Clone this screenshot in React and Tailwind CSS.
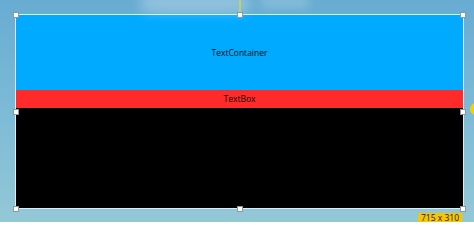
import React from 'react';

// selection handles around the picked element
const handles = [
  'left-[13px] top-[12px]',
  'left-[237px] top-[12px]',
  'left-[460px] top-[12px]',
  'left-[13px] top-[109px]',
  'left-[460px] top-[109px]',
  'left-[13px] top-[206px]',
  'left-[237px] top-[206px]',
  'left-[460px] top-[206px]',
];

export default function App() {
  return (
    <div className="relative w-[474px] h-[222px] overflow-hidden bg-gradient-to-b from-[#68acd2] via-[#7cbad6] to-[#93c8d6] font-['Open_Sans','Liberation_Sans',sans-serif]">
      {/* blurry wallpaper clouds */}
      <div className="absolute left-[140px] top-[-8px] w-[110px] h-[22px] rounded-full bg-white/25 blur-[6px]" />
      <div className="absolute left-[260px] top-[-4px] w-[50px] h-[12px] rounded-full bg-white/20 blur-[5px]" />

      <div className="pl-[16px] pt-[15px]">
        <div className="w-[447px] h-[193px] flex flex-col outline outline-1 outline-[#d8eef8]">
          <div className="h-[75px] bg-[#00aaff] flex items-center justify-center text-[8.5px] text-[#0a0a0a] pt-[2px]">
            TextContainer
          </div>
          <div className="h-[18px] bg-[#ff2b2b] flex items-center justify-center text-[8.5px] text-[#0a0a0a]">
            TextBox
          </div>
          <div className="flex-1 bg-black" />
        </div>
      </div>

      {/* rotate stem */}
      <div className="absolute left-[239px] top-0 w-[2px] h-[13px] bg-[#b9d46e]" />

      {handles.map((h) => (
        <div
          key={h}
          className={`absolute ${h} w-[6px] h-[6px] bg-white border border-[#8a98a0]`}
        />
      ))}

      {/* yellow knob at right edge */}
      <div className="absolute left-[470px] top-[103px] w-[12px] h-[12px] rounded-full bg-[#f5d000]" />

      <div className="absolute left-[418px] top-[213px] w-[44px] h-[11px] bg-[#f7c600] text-[8.5px] leading-[10px] text-[#222] text-center">
        715 x 310
      </div>
    </div>
  );
}
